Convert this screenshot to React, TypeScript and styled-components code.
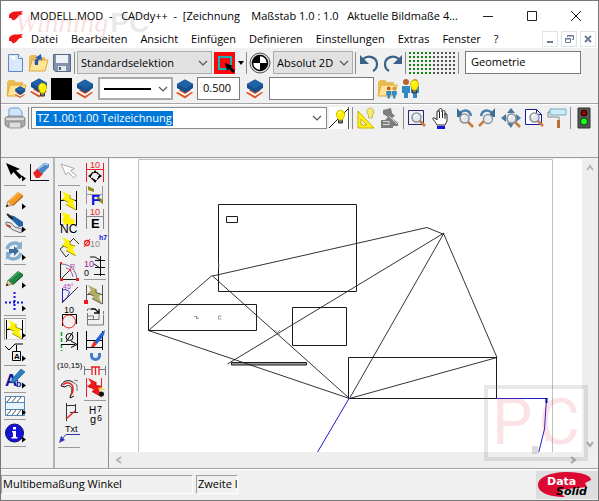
import React from "react";
import styled, { createGlobalStyle, css } from "styled-components";

const Global = createGlobalStyle`
  * { box-sizing: border-box; }
  body { margin: 0; background: #f0f0f0; }
  body, button, input, select { font-family: "Open Sans", "Noto Sans", sans-serif; font-size: 11px; line-height: 16px; color: #000; }
  svg { display: block; flex: none; }
`;

const Window = styled.div`
  position: relative;
  display: flex;
  flex-direction: column;
  min-height: 100vh;
  border: 1px solid #777;
  background: #f0f0f0;
`;

const TitleBar = styled.header`
  display: flex;
  align-items: center;
  height: 29px;
  padding-left: 7px;
  gap: 6px;
  background: #fff;
`;

const Title = styled.h1`
  flex: 1;
  min-width: 0;
  margin: 0;
  font-size: 11px;
  font-weight: 400;
  white-space: pre;
  overflow: hidden;
`;

const CaptionButton = styled.button`
  display: grid;
  place-items: center;
  width: 44px;
  height: 28px;
  padding: 0;
  border: 0;
  background: transparent;
`;

const CaptionGroup = styled.div`
  display: flex;
`;

const MenuBar = styled.nav`
  display: flex;
  align-items: center;
  gap: 13px;
  height: 18px;
  padding: 0 2px 0 7px;
  background: #fff;
`;

const MenuLogo = styled.span`
  width: 16px;
  margin-right: -6px;
`;

const MenuItem = styled.button`
  padding: 0;
  border: 0;
  background: transparent;
  white-space: nowrap;
`;

const ChildControls = styled.div`
  display: flex;
  gap: 3px;
  margin-left: auto;
`;

const ChildButton = styled.button`
  display: grid;
  place-items: center;
  width: 16px;
  height: 16px;
  padding: 0;
  border: 1px solid #dfe3e8;
  background: #fff;
`;

const Bars = styled.div`
  display: flex;
  flex-direction: column;
  gap: 1px;
  padding: 2px 0 2px 4px;
  border-bottom: 1px solid #a5a5a5;
`;

const ToolRow = styled.div`
  display: flex;
  align-items: center;
  gap: 2px;
  height: 25px;
`;

const ViewRow = styled(ToolRow)`
  height: 54px;
  padding: 2px 3px 0 3px;
  align-items: flex-start;
  border-top: 1px solid #fff;
  border-bottom: 1px solid #9b9b9b;
`;

const BarButton = styled.button<{ $w?: number; $bg?: string }>`
  display: grid;
  place-items: center;
  flex: none;
  width: ${(p) => p.$w ?? 22}px;
  height: 22px;
  padding: 0;
  border: 0;
  background: ${(p) => p.$bg ?? "transparent"};
`;

const VLine = styled.span`
  flex: none;
  width: 1px;
  height: 22px;
  background: #8d8d8d;
`;

const DropBox = styled.label<{ $w: number; $light?: boolean }>`
  display: grid;
  align-items: center;
  flex: none;
  width: ${(p) => p.$w}px;
  height: 23px;
  border: ${(p) => (p.$light ? "2px solid #a9a9a9" : "1px solid #adadad")};
  background: ${(p) => (p.$light ? "#fff" : "#e1e1e1")};
  & > * { grid-area: 1 / 1; }
  & > svg { pointer-events: none; justify-self: end; margin-right: 3px; }
`;

const Select = styled.select`
  appearance: none;
  width: 100%;
  padding: 0 16px 0 3px;
  border: 0;
  outline: 0;
  background: transparent;
`;

const LineSample = styled.span`
  width: 47px;
  height: 2px;
  margin-left: 4px;
  background: #000;
  pointer-events: none;
`;

const TextBox = styled.input<{ $w: number; $gap?: boolean }>`
  flex: none;
  width: ${(p) => p.$w}px;
  height: 23px;
  margin-left: ${(p) => (p.$gap ? 4 : 0)}px;
  padding: 0 5px 2px;
  border: 1px solid #7a7a7a;
  background: #fff;
`;

const Combo = styled.div`
  display: flex;
  align-items: center;
  flex: 1;
  min-width: 0;
  height: 22px;
  padding: 0 4px;
  border: 1px solid #8a8a8a;
  background: #fff;
`;

const ComboInput = styled.input`
  field-sizing: content;
  height: 15px;
  padding: 0 1px;
  border: 0;
  outline: 0;
  background: #0078d7;
  color: #fff;
`;

const ComboArrow = styled.button`
  margin-left: auto;
  padding: 0;
  border: 0;
  background: transparent;
`;

const Work = styled.main`
  display: flex;
  flex: 1;
  min-height: 0;
`;

const Palette = styled.aside<{ $wide?: boolean }>`
  display: flex;
  gap: ${(p) => (p.$wide ? 4 : 3)}px;
  padding: 2px 2px 0 3px;
  border-right: ${(p) => (p.$wide ? "1px solid #8d8d8d" : "2px solid #b4b4b4")};
`;

const ToolColumn = styled.div`
  display: flex;
  flex-direction: column;
  width: 22px;
`;

type Size = "s" | "m" | "l";
const heights = { s: 22, m: 23, l: 24 };

const Tool = styled.button<{ $size: Size; $on?: boolean }>`
  display: grid;
  place-items: center;
  flex: none;
  width: 22px;
  height: ${(p) => heights[p.$size]}px;
  padding: 0;
  border: 0;
  background: transparent;
  & > svg { overflow: visible; }
  ${(p) => p.$on && css`background: #f8f8f8; box-shadow: inset 1px 1px 0 #a0a0a0, inset -1px -1px 0 #d8d8d8;`}
`;

const Rule = styled.hr`
  flex: none;
  width: 22px;
  height: 1px;
  margin: 2px 0;
  border: 0;
  background: #999;
`;

const View = styled.section`
  display: grid;
  flex: 1;
  min-width: 0;
  grid-template: minmax(293px, 1fr) 16px / 1fr 16px;
  padding: 1px 0 0 1px;
`;

const Drawing = styled.svg`
  width: 100%;
  height: 100%;
  min-width: 0;
  background: #fff;
`;

const VScroll = styled.div`
  display: flex;
  flex-direction: column;
  justify-content: space-between;
  align-items: center;
  padding: 4px 0 3px;
  background: #eee;
`;

const HScroll = styled.div`
  display: flex;
  justify-content: space-between;
  align-items: center;
  padding: 0 4px;
  background: #eee;
`;

const ScrollButton = styled.button`
  padding: 0;
  border: 0;
  background: transparent;
`;

const StatusBar = styled.footer`
  display: flex;
  align-items: center;
  gap: 3px;
  height: 32px;
  border-top: 1px solid #a0a0a0;
  box-shadow: inset 0 1px 0 #fff;
`;

const StatusPanel = styled.output<{ $w: number }>`
  width: ${(p) => p.$w}px;
  height: 19px;
  padding-left: 1px;
  border: 1px solid #fff;
  border-top-color: #a0a0a0;
  border-left-color: #a0a0a0;
  white-space: nowrap;
  overflow: hidden;
`;

const Brand = styled.div`
  margin-left: auto;
  background: #dedede;
`;

const StampTop = styled.div`
  position: absolute;
  left: 14px;
  top: 8px;
  display: flex;
  align-items: center;
  gap: 2px;
  pointer-events: none;
  font: italic 28px/28px "Liberation Serif", serif;
  color: rgba(225, 110, 120, 0.22);
`;

const StampTopBold = styled.b`
  font: 700 28px/28px "Liberation Sans", sans-serif;
  color: rgba(120, 120, 120, 0.17);
`;

const StampBottom = styled.div`
  position: absolute;
  right: 10px;
  bottom: 39px;
  display: flex;
  justify-content: space-between;
  align-items: center;
  width: 104px;
  height: 76px;
  padding: 0 4px;
  border: 4px solid rgba(120, 120, 120, 0.18);
  pointer-events: none;
  font: 400 64px/60px Roboto, sans-serif;
  color: rgba(220, 60, 80, 0.15);
`;

const StampDot = styled.i`
  align-self: flex-end;
  width: 8px;
  height: 8px;
  margin-bottom: 3px;
  background: rgba(120, 120, 120, 0.25);
`;

const Ico = ({ w = 22, h = 22, children }: { w?: number; h?: number; children: React.ReactNode }) => (
  <svg width={w} height={h} viewBox={`0 0 ${w} ${h}`} fill="none" aria-hidden="true">
    {children}
  </svg>
);

const Chevron = ({ d = "M1 3l4 4 4-4", c = "#555", s = 1.2 }: { d?: string; c?: string; s?: number }) => (
  <Ico w={10} h={10}><path d={d} stroke={c} strokeWidth={s} /></Ico>
);

const sans = "Liberation Sans, sans-serif";
const T = ({ x, y, s = 8, c = "#000", b, children }: { x: number; y: number; s?: number; c?: string; b?: boolean; children: string }) => (
  <text x={x} y={y} fontSize={s} fill={c} fontFamily={sans} fontWeight={b ? 700 : 400}>{children}</text>
);

const RedBird = () => (
  <Ico w={16} h={12}>
    <path d="M1 6C1 3 5 1 9 1.500L15 1l-2 2 2 1-4 1.500L8 9l-3 1.500L3 8 1 8z" fill="#ee1515" />
  </Ico>
);

const Bulb = ({ x, y }: { x: number; y: number }) => (
  <g transform={`translate(${x} ${y})`}>
    <path d="M3.500 10h4v4h-4z" fill="#777" stroke="#333" />
    <path d="M5.500 1a4.500 4.500 0 0 1 3 7.500L7.500 11h-4L2.500 8.500A4.500 4.500 0 0 1 5.500 1z" fill="#fff200" stroke="#b9a900" strokeWidth=".8" />
    <path d="M4 4l1-1" stroke="#fff" strokeWidth="1.500" />
  </g>
);

const LayerShapes = () => (
  <>
    <path d="M1 14l4-3h10l3 2.500-8 6z" fill="#dc5629" />
    <path d="M1 10l9 5 8-5v2l-8 5-9-5z" fill="#fff" />
    <path d="M2 5l8-4.500L18 5v4l-7.500 5L2 9z" fill="#174f91" />
    <path d="M2 5l8-4.500L18 5l-7.500 4.500z" fill="#2062a8" />
  </>
);
const Layers = () => <Ico w={20} h={20}><LayerShapes /></Ico>;

const FolderShapes = () => (
  <>
    <path d="M2 4l2-2h5l2 2h7v13H2z" fill="#e8bd55" />
    <path d="M2 18L5 7h16l-3 11z" fill="#ffe494" stroke="#dba93a" />
  </>
);

const Lens = ({ x, y }: { x: number; y: number }) => (
  <g transform={`translate(${x} ${y})`}>
    <path d="M8.500 8.500L14 14" stroke="#c97b3c" strokeWidth="2.600" />
    <circle cx="5.500" cy="5.500" r="4.500" fill="#e0e8ee" stroke="#8c9399" strokeWidth="1.500" />
    <path d="M3 5a3 3 0 0 1 3-2.500" stroke="#fff" strokeWidth="1.300" />
  </g>
);

const Bolt = ({ c = "#fff200", e = "#8d8600", t }: { c?: string; e?: string; t?: string }) => (
  <g transform={t}>
    <path d="M4 2l8 4v3.500l5 1.500-2 3 3 7-10-5.500 2-2.500-6-2.500 3-3.500z" fill={c} />
    <path d="M12 6v3.500l5 1.500M8 15.500L18 21M4 10.500l6 2.500" stroke={e} strokeWidth=".8" />
  </g>
);

const Pencil = ({ c, d }: { c: string; d: string }) => (
  <>
    <path d="M2 18l2-6 4 4z" fill="#f2cfa0" stroke="#76502a" strokeWidth=".6" />
    <path d="M2 18l1-2.500 1.500 1.500z" fill="#000" />
    <path d="M4 12L14 3l5 3L8 16z" fill={c} />
    <path d="M8 16L19 6v2L9 17z" fill={d} />
    <path d="M5.500 12L15 4" stroke="#fff" strokeOpacity=".35" />
  </>
);

const More = () => <path d="M18 14.500l4 3-4 3z" fill="#000" />;

const Bars2 = ({ c = "#000" }: { c?: string }) => <path d="M2.500 2v19M18.500 2v19M2 11.500h17" stroke={c} />;

const icons: Record<string, React.ReactNode> = {
  pick: <><path d="M2 2l5 12 2.500-3 6 7 3-2.500-6.500-6L16 8z" fill="#000" /><More /></>,
  pencil: <><Pencil c="#f49a20" d="#b9600c" /><More /></>,
  pliers: <><path d="M5 3l5 1 9 6v4l-4 1-7-7-4-3z" fill="#2465a8" /><path d="M3 2l6 5" stroke="#222" strokeWidth="2" /><path d="M2 10l5 1 4 4 7 2-1 4-8-3-7-5z" fill="#dfe1e5" stroke="#555" strokeWidth=".8" /><path d="M3 13l4 2" stroke="#c43a32" strokeWidth="1.500" /><More /></>,
  cycle: <><path d="M3 9a8 8 0 0 1 13-4" stroke="#83aed0" strokeWidth="3.500" /><path d="M18 1v8h-7zM2 20v-8h7z" fill="#83aed0" /><path d="M17 13a8 8 0 0 1-13 4" stroke="#83aed0" strokeWidth="3.500" /><path d="M5 9h5V6l5 5-5 5v-3H5z" fill="#3c6e9c" /><More /></>,
  green: <><Pencil c="#1b8a3c" d="#085220" /><More /></>,
  cross: <><path d="M10.500 1v20M1 11.500h19" stroke="#1010ee" strokeWidth="2" strokeDasharray="2 2" /><More /></>,
  dim: <><Bars2 /><Bolt /></>,
  dimOn: <><Bars2 /><Bolt /><More /></>,
  datum: <><path d="M1 5l4 4 6-6h8M12.500 4v7" stroke="#000" /><path d="M8.500 10.500h8v9h-8z" stroke="#000" /><T x={10} y={18} s={8} b>A</T><More /></>,
  text: <><T x={1} y={18} s={17} c="#16169c" b>A</T><T x={12} y={19} s={9} c="#16169c" b>b</T><path d="M8 11L17 1l4 3L11 14l-4 1z" fill="#2b80c4" stroke="#185488" strokeWidth=".6" /><More /></>,
  hatch: <><path d="M1.500 1.500h19v19h-19z" fill="#fff" /><path d="M3 7l4-5M8 7l4-5M13 7l4-5M3 20l4-5M8 20l4-5M13 20l4-5" stroke="#555" /><path d="M2 8h18v6H2z" fill="#e6f2fc" /><path d="M1.500 1.500h19v19h-19zM1.500 7.500h19M1.500 14.500h19" stroke="#5585b5" /><More /></>,
  info: <><circle cx="10.500" cy="11" r="9" fill="#1414d0" stroke="#0c0c82" /><path d="M9 5h3v2.500H9zM8 9h4v6h1.500v1.500h-6V15H9v-4.500H8z" fill="#fff" /><More /></>,
  eraser: <><path d="M1.500 3v17M1 19.500h19" stroke="#111" /><path d="M4 12l5-5 5 6-4 4H7z" fill="#e92323" /><path d="M8 8l7-6 5 1v3l-7 7z" fill="#4b87c7" /><path d="M9 8l7-5 3 1" stroke="#a8cdf0" strokeWidth="1.500" /></>,
  pickWhite: <path d="M3 3l5 11 2.500-3 5 6 3-2.500-6-5 4-2z" fill="#fff" stroke="#aaa" />,
  nc: <><path d="M2.500 1v12M18.500 1v12" stroke="#000" /><path d="M4 0l8 3v3l5 2-1 4-9 1-3-5 2-2z" fill="#fff200" /><T x={2} y={21} s={12}>NC</T></>,
  dimAngle: <><path d="M12 6l4-4M15 2l6 6M2 13l4-3M2 13l6 8M8 21l3-3" stroke="#333" /><Bolt t="translate(0 -1)" /></>,
  arc: <><path d="M3 4C12 4 18 10 19 19" stroke="#6c6ca4" /><path d="M8 8c4 1 6 4 7 9" stroke="#a447a4" /><path d="M2.500 3v16.500H20M3 19l9-9" stroke="#222" /><path d="M2 2h2v2H2zM18 18h3v3h-3zM2 18h3v3H2zM11 9h2v2h-2z" fill="#e22" /><T x={12} y={9} s={7} c="#a447a4">R</T></>,
  slope: <><path d="M4.500 5v15M4 20L20 4" stroke="#333" /><path d="M4.500 7v11c3-1 6-5 7-9C10 7 7 6 4.500 7z" stroke="#2222cc" /><T x={5} y={6} s={7} c="#b040c0">45°</T></>,
  circle: <><path d="M4.500 19V7.500h14V17" stroke="#000" /><T x={6} y={6} s={9}>10</T><circle cx="11" cy="14.500" r="6.500" stroke="#f01818" /></>,
  diameter: <><path d="M3.500 2v19" stroke="#12a12a" strokeDasharray="4 2" strokeWidth="1.500" /><path d="M3 14.500h14M19.500 2v18M13 11l6 3.500-6 3M15 2L8 12" stroke="#000" /><circle cx="11.500" cy="7" r="3.500" stroke="#000" /></>,
  coord: <T x={-1} y={14} s={8}>(10,15)</T>,
  curve: <><path d="M3 9c2-6 9-7 13-3M3 9l4 1M7 10c3-3 7-1 7 3s-2 5-2 8M12 21l4-2" stroke="#111" /><path d="M5 8c4-4 10-2 10 4 0 3-1 5-2 6" stroke="#e82020" strokeWidth="1.500" /><path d="M15 5l4 3v6M16 3l4 1" stroke="#777" /></>,
  poly: <><path d="M8.500 3v18M8 5.500h10M17.500 4v8M12 12.500h8" stroke="#333" /><path d="M8 19l9-8" stroke="#e82020" strokeWidth="1.300" /></>,
  leader: <><T x={7} y={9} s={9}>Txt</T><path d="M22 11.500H8L3 17" stroke="#3232a0" /><path d="M1 20l2-7 4 4z" fill="#3232c0" /></>,
  fit: <><T x={6} y={7} s={9} c="#e82020">10</T><path d="M2.500 2v19M19.500 2v19M2 8.500h18" stroke="#e82020" /><circle cx="11" cy="15" r="4" stroke="#000" strokeWidth="1.300" strokeDasharray="4 2.300" /><path d="M11 9l2 3H9zM11 22l2-3H9zM4 15l3-2v4zM18 15l-3-2v4z" fill="#000" /></>,
  font: <><path d="M2.500 1v18M18.500 1v18M2 9.500h17" stroke="#999" /><path d="M4 1l6 3v3L4 5zM13 11l6 4v4l-6-4z" fill="#978a18" /><T x={7} y={20} s={15} c="#1010e8" b>F</T></>,
  edit: <><T x={6} y={7} s={9} c="#e82020">10</T><path d="M2.500 1v20M19.500 1v20M2 8.500h17" stroke="#888" /><T x={7} y={20} s={13} b>E</T></>,
  tol: <><circle cx="3" cy="11" r="2.500" stroke="#e82020" strokeWidth="1.300" /><path d="M0 15L6 7" stroke="#e82020" /><T x={6} y={15} s={9} c="#888">10</T><T x={15} y={8} s={7} c="#1010e8" b>h7</T></>,
  scale: <><T x={0} y={12} s={9} c="#902090">10</T><T x={0} y={21} s={9}>0</T><path d="M16.500 1v20M11 5.500h10M11 12.500h10M10 19.500h11M6 2h5l5 3M10 9l6 4" stroke="#111" /></>,
  dimGray: <><Bars2 c="#555" /><Bolt c="#b3ae62" e="#444" /><path d="M0 17h4v4H0z" fill="#f01818" /></>,
  nested: <><path d="M3.500 7v12h16V9M9.500 14v-4h-6M3 13.500h12V5M3.500 5V3h7M19.500 5v3" stroke="#777" /><path d="M7 3h4l4 4M15 3v4h-5" stroke="#111" strokeWidth="1.300" /></>,
  brush: <><Bars2 /><path d="M10 13l7-9 4-3-1 5-7 9z" fill="#1c62d8" /><path d="M10 12l3 3-3 3H7z" fill="#f02a2a" /><path d="M3 18.500h15" stroke="#111" /></>,
  magnet: <><path d="M7.500 0v3a4 3.500 0 0 0 8 0V0" stroke="#447ccc" strokeWidth="3" /><path d="M.5 13v9M21.500 13v9M0 16.500h7M15 16.500h7" stroke="#777" /><path d="M8 22v-8M11.500 22v-8M15 22v-8M7 14h9" stroke="#e82020" strokeWidth="1.300" /></>,
  dimRed: <><path d="M2.500 2v19M17.500 2v10M2 10h15" stroke="#e82020" /><Bolt c="#f01818" e="#b00000" /><circle cx="17.500" cy="18" r="2.500" fill="#111" /><path d="M17 11v4M14 12l7 2" stroke="#e8d619" /></>,
  fitClass: <><T x={5} y={10} s={10}>H</T><T x={13} y={8} s={9}>7</T><T x={6} y={19} s={11}>g</T><T x={13} y={17} s={9}>6</T></>,
};

type Entry = "-" | [string, string, Size];
const columns: Entry[][] = [
  [["pick", "Auswählen", "m"], "-", ["pencil", "Zeichnen", "m"], ["pliers", "Ändern", "m"], "-", ["cycle", "Transformieren", "m"], "-", ["green", "Konstruieren", "m"], ["cross", "Hilfslinien", "m"], "-", ["dimOn", "Bemaßung", "s"], ["datum", "Symbole", "m"], "-", ["text", "Text", "s"], "-", ["hatch", "Schraffur", "s"], "-", ["info", "Information", "s"], "-"],
  [["eraser", "Löschen", "m"]],
  [["pickWhite", "Wählen", "m"], "-", ["dim", "Multibemaßung", "m"], ["nc", "NC-Bemaßung", "l"], ["dimAngle", "Parallelbemaßung", "l"], ["arc", "Multibemaßung Winkel", "m"], ["slope", "Winkelbemaßung", "l"], ["circle", "Durchmesser", "m"], ["diameter", "Durchmesser linear", "l"], ["coord", "Koordinaten", "m"], ["curve", "Bogenlänge", "m"], ["poly", "Fase", "m"], ["leader", "Hinweistext", "m"], "-"],
  [["fit", "Maß verschieben", "l"], ["font", "Schrift", "m"], ["edit", "Maßtext", "l"], ["tol", "Toleranz", "m"], ["scale", "Maßkette", "m"], "-", ["dimGray", "Maß lösen", "m"], ["nested", "Maß anordnen", "m"], ["brush", "Maß formatieren", "l"], ["magnet", "Maß fangen", "m"], ["dimRed", "Maß löschen", "m"], "-", ["fitClass", "Passung", "m"]],
];

const Column = ({ items }: { items: Entry[] }) => (
  <ToolColumn>
    {items.map((it, i) =>
      it === "-" ? <Rule key={i} /> : (
        <Tool key={i} $size={it[2]} $on={it[0] === "dimOn"} aria-label={it[1]}><Ico>{icons[it[0]]}</Ico></Tool>
      ))}
  </ToolColumn>
);

const menus = ["Datei", "Bearbeiten", "Ansicht", "Einfügen", "Definieren", "Einstellungen", "Extras", "Fenster", "?"];

const dots = Array.from({ length: 12 * 6 }, (_, i) => ({ x: (i % 12) * 4, y: Math.floor(i / 12) * 4 }));

const Undo = ({ flip }: { flip?: boolean }) => (
  <Ico w={20} h={20}>
    <g transform={flip ? "translate(20 0) scale(-1 1)" : undefined}>
      <path d="M4 6c6-5 14-1 14 5 0 3-2 6-4 7" stroke="#3b6389" strokeWidth="2.200" />
      <path d="M1 2v9h9z" fill="#3b6389" />
    </g>
  </Ico>
);

const Turn = ({ flip }: { flip?: boolean }) => (
  <Ico w={20}>
    <g transform={flip ? "translate(19 0) scale(-1 1)" : undefined}>
      <path d="M5 6c4-4 10-3 11 3" stroke="#4f7fa6" strokeWidth="2.500" />
      <path d="M2 1v9h8z" fill="#3b6f98" />
    </g>
    {flip ? <><path d="M7 13l-6 6" stroke="#c97b3c" strokeWidth="2.500" /><circle cx="10" cy="12" r="4.500" fill="#e4e9ed" stroke="#8c9399" strokeWidth="1.300" /></> : <Lens x={4} y={6} />}
  </Ico>
);

const People = () => (
  <>
    <circle cx="6" cy="4" r="3" fill="#ba612d" /><circle cx="15" cy="4" r="3" fill="#e08b38" />
    <path d="M2 8h8v7H8v5H4v-5H2zM11 8h8v7h-2v5h-4v-5h-2z" fill="#3289c4" />
  </>
);

const Paper = () => (
  <Drawing viewBox="110 159 472 293" preserveAspectRatio="xMinYMin meet" fill="none" role="img" aria-label="Zeichnung">
    <path d="M138.500 454V159.500h414V454" stroke="#c0c0c0" />
    <g stroke="#1c1c1c">
      <path d="M218.500 204.500h138v87h-138zM226.500 216.500h11v6h-11zM148.500 304.500h108v26h-108zM292.500 307.500h54v38h-54zM348.500 357.500h148v41h-148z" />
      <path d="M231.500 362.500h75v2.500h-75z" fill="#999" />
      <path d="M148.500 330.500L212 275.500 349.500 398.500zM212.500 276L427 227.500l17 7 53 123L349.500 398.500 444 233 227.500 364" strokeWidth=".9" />
    </g>
    <path d="M349 398.500L317 453M496.500 398.500h51M546.500 398l-2 31-6 24" stroke="#1e1ecb" />
    <path d="M546.500 398v5" stroke="#0808a0" strokeWidth="2" />
    <path d="M275 330l5 5M280 330l-5 5M194 316.500h3v2h2M196.500 316v3M218.500 316h3M218.500 316v3h3M218 264h1v3h-1M546 440h1" stroke="#888" strokeWidth=".8" />
  </Drawing>
);

export default function App() {
  return (
    <Window>
      <Global />
      <TitleBar>
        <RedBird />
        <Title>{"MODELL.MOD  -   CADdy++  -  [Zeichnung    Maßstab 1.0 : 1.0   Aktuelle Bildmaße 4..."}</Title>
        <CaptionGroup>
          <CaptionButton aria-label="Minimieren"><Ico w={10} h={10}><path d="M0 5.500h10" stroke="#222" /></Ico></CaptionButton>
          <CaptionButton aria-label="Maximieren"><Ico w={10} h={10}><path d="M.5.5h9v9h-9z" stroke="#222" /></Ico></CaptionButton>
          <CaptionButton aria-label="Schließen"><Ico w={10} h={10}><path d="M0 0l10 10M10 0L0 10" stroke="#222" /></Ico></CaptionButton>
        </CaptionGroup>
      </TitleBar>
      <MenuBar>
        <MenuLogo><RedBird /></MenuLogo>
        {menus.map((m) => <MenuItem key={m}>{m}</MenuItem>)}
        <ChildControls>
          <ChildButton aria-label="Fenster minimieren"><Ico w={10} h={10}><path d="M2 8h6" stroke="#6b7a92" strokeWidth="2" /></Ico></ChildButton>
          <ChildButton aria-label="Fenster wiederherstellen"><Ico w={10} h={10}><path d="M3.500 3V1.500h6v4H8M1.500 4.500h5v4h-5zM1 5h6M3 2h7" stroke="#6b7a92" /></Ico></ChildButton>
          <ChildButton aria-label="Fenster schließen"><Ico w={10} h={10}><path d="M2 2l6 6M8 2L2 8" stroke="#6b7a92" strokeWidth="2" /></Ico></ChildButton>
        </ChildControls>
      </MenuBar>

      <Bars>
        <ToolRow>
          <BarButton $w={20} aria-label="Neu"><Ico w={18} h={20}><path d="M2.500 1.500h10l4 4v13h-14z" fill="#d9e9fb" stroke="#5f87c0" /><path d="M12.500 1.500v4h4" fill="#fff" stroke="#5f87c0" /><path d="M4 3h5v5z" fill="#fff" /></Ico></BarButton>
          <BarButton aria-label="Öffnen"><Ico w={22} h={20}><FolderShapes /><path d="M8 12c-1-4 0-6 3-7H8l6-4 1 7-2-2c-2 1-2 3-2 6z" fill="#2458b8" /></Ico></BarButton>
          <BarButton $w={21} aria-label="Speichern"><Ico w={20} h={20}><path d="M1.500 1.500h17v17h-15l-2-2z" fill="#7f93ad" stroke="#536781" /><path d="M4 2h12v8H4z" fill="#eef2f7" /><path d="M6 13h8v5H6z" fill="#e4e7eb" /><path d="M7 14h2v3H7z" fill="#465a74" /></Ico></BarButton>
          <VLine />
          <DropBox $w={135}><Select aria-label="Selektion"><option>Standardselektion</option></Select><Chevron /></DropBox>
          <BarButton $w={21} $bg="#fa0a0a" aria-label="Selektionsfenster"><Ico w={20} h={20}><path d="M4 4h12v12H4z" stroke="#12b4ba" strokeWidth="2" /><path d="M10 10l8 3-2 1 4 4-2 2-4-4-2 2z" fill="#000" /></Ico></BarButton>
          <BarButton $w={7} aria-label="Weitere Optionen"><Ico w={6} h={4}><path d="M0 0h6L3 4z" fill="#000" /></Ico></BarButton>
          <VLine />
          <BarButton aria-label="Schwerpunkt"><Ico><circle cx="11" cy="11" r="10" fill="#ddd" stroke="#555" /><circle cx="11" cy="11" r="7.500" fill="#fff" stroke="#000" strokeWidth="1.500" /><path d="M11 11V3.500A7.500 7.500 0 0 0 3.500 11zM11 11v7.500a7.500 7.500 0 0 0 7.500-7.500z" fill="#000" /></Ico></BarButton>
          <DropBox $w={80}><Select aria-label="Koordinatenmodus"><option>Absolut 2D</option></Select><Chevron /></DropBox>
          <VLine />
          <BarButton aria-label="Rückgängig"><Undo /></BarButton>
          <BarButton $w={21} aria-label="Wiederholen"><Undo flip /></BarButton>
          <VLine />
          <BarButton $w={48} aria-label="Raster"><Ico w={46}>{dots.map((d) => <rect key={`${d.x}-${d.y}`} x={d.x} y={d.y} width="2" height="2" fill={d.x < 24 ? "#168016" : "#555"} />)}</Ico></BarButton>
          <VLine />
          <TextBox $w={116} $gap aria-label="Ebene" defaultValue="Geometrie" />
        </ToolRow>
        <ToolRow>
          <BarButton $w={22} aria-label="Folien öffnen"><Ico w={22}><FolderShapes /><g transform="translate(9 8) scale(.62)"><LayerShapes /></g></Ico></BarButton>
          <BarButton $w={20} aria-label="Folien einblenden"><Ico w={20}><LayerShapes /><Bulb x={8} y={4} /></Ico></BarButton>
          <BarButton $w={21} $bg="#000" aria-label="Farbe" />
          <BarButton aria-label="Farbe nach Folie"><Layers /></BarButton>
          <DropBox $w={75} $light><Select aria-label="Linienart"><option aria-label="Volllinie" /></Select><LineSample /><Chevron /></DropBox>
          <BarButton $w={20} aria-label="Linienart nach Folie"><Layers /></BarButton>
          <TextBox $w={43} aria-label="Strichstärke" defaultValue="0.500" />
          <BarButton $w={25} aria-label="Stärke nach Folie"><Layers /></BarButton>
          <TextBox $w={105} aria-label="Gruppe" />
          <BarButton $w={22} aria-label="Gruppen öffnen"><Ico w={22}><FolderShapes /><g transform="translate(9 8) scale(.62)"><People /></g></Ico></BarButton>
          <BarButton $w={21} aria-label="Gruppen einblenden"><Ico w={21}><People /><Bulb x={9} y={1} /></Ico></BarButton>
        </ToolRow>
      </Bars>

      <ViewRow>
        <BarButton aria-label="Drucken"><Ico><path d="M5 10V2l2-1h8l3 4v6z" fill="#cfe5fb" stroke="#6fa0d8" /><path d="M1 11l3-2h14l3 2v7l-2 2H3l-2-2z" fill="#a9a9a9" stroke="#777" strokeWidth=".7" /><path d="M2 12h18" stroke="#eee" strokeWidth="1.500" /><path d="M5 15h12v6H5z" fill="#ddd" stroke="#777" strokeWidth=".7" /></Ico></BarButton>
        <VLine />
        <Combo>
          <ComboInput aria-label="Teilzeichnung" defaultValue="TZ 1.00:1.00 Teilzeichnung" />
          <ComboArrow aria-label="Liste öffnen"><Chevron /></ComboArrow>
        </Combo>
        <BarButton $w={21} $bg="#fff" aria-label="Beleuchtung"><Ico w={21}><path d="M0 21L20 1" stroke="#111" /><path d="M19.500 0v22" stroke="#555" /><Bulb x={6} y={2} /></Ico></BarButton>
        <VLine />
        <BarButton aria-label="Konstruktionshilfe"><Ico><path d="M3 4l16 17H3z" fill="#ffee17" stroke="#c8b400" /><path d="M6 12l6 6H6z" fill="#f0f0f0" stroke="#c8b400" /><path d="M14.500 1a4 4 0 0 1 3 7v3h-4V8a4 4 0 0 1 1-7z" fill="#f9ec69" stroke="#c3b66d" /></Ico></BarButton>
        <BarButton aria-label="Stempel"><Ico><path d="M4 3l8-2 1 5 3 3-3 2 6 5v3h-5v2H2v-8h4l3-3-5-3z" fill="#7d7d7d" /><path d="M4 14.500h6v3H4M10 9l8 8" stroke="#dcdcdc" /></Ico></BarButton>
        <VLine />
        <BarButton aria-label="Zoom Fenster"><Ico><path d="M2.500 3.500h15v14h-15z" stroke="#23237b" /><Lens x={5} y={5} /></Ico></BarButton>
        <BarButton aria-label="Verschieben"><Ico><path d="M7 18c-2-4-5-6-4-7s3 1 4 2V5c0-2 2-2 2 0V3c0-2 3-2 3 0v2c0-2 3-2 3 0v3c0-2 2-2 2 0v6l-2 4z" fill="#fff" stroke="#222" /><path d="M9.500 5v6M12.500 5v6M15 7v5" stroke="#222" /><path d="M7 19h8v3H7z" fill="#1414e0" /></Ico></BarButton>
        <BarButton aria-label="Vorige Ansicht"><Turn /></BarButton>
        <BarButton $w={20} aria-label="Nächste Ansicht"><Turn flip /></BarButton>
        <BarButton aria-label="Alles zeigen"><Ico><path d="M11 1l4 5H7zM1 11l5-4v8zM21 11l-5-4v8zM11 21l-4-5h7z" fill="#4679a2" /><Lens x={6} y={6} /></Ico></BarButton>
        <BarButton $w={21} aria-label="Blatt zeigen"><Ico w={21}><path d="M1.500 2.500h11l5 5v10h-16zM12.500 2.500v5h5" fill="#fff" stroke="#1b1b9b" /><Lens x={5} y={5} /></Ico></BarButton>
        <BarButton $w={21} aria-label="Neu zeichnen"><Ico w={21}><path d="M3 2h16v6H3z" fill="#cdeafa" stroke="#79a9c4" /><path d="M3 5H1v5h11v4" stroke="#888" /><path d="M10 13h3v8h-3z" fill="#bb6e32" /></Ico></BarButton>
        <VLine />
        <BarButton aria-label="Status"><Ico><path d="M5 1h12v20H5z" fill="#555" stroke="#333" /><circle cx="11" cy="6" r="3" fill="#8c0000" stroke="#200" /><circle cx="11" cy="14.500" r="3.500" fill="#1dff1d" stroke="#041" /></Ico></BarButton>
      </ViewRow>

      <Work>
        <Palette><Column items={columns[0]} /><Column items={columns[1]} /></Palette>
        <Palette $wide><Column items={columns[2]} /><Column items={columns[3]} /></Palette>
        <View>
          <Paper />
          <VScroll>
            <ScrollButton aria-label="Nach oben"><Chevron d="M2 7l3-4 3 4" c="#b5b5b5" s={2} /></ScrollButton>
            <ScrollButton aria-label="Nach unten"><Chevron d="M2 3l3 4 3-4" c="#a5a5a5" s={2} /></ScrollButton>
          </VScroll>
          <HScroll>
            <ScrollButton aria-label="Nach links"><Chevron d="M7 2L3 5l4 3" c="#b5b5b5" s={2} /></ScrollButton>
            <ScrollButton aria-label="Nach rechts"><Chevron d="M3 2l4 3-4 3" c="#a5a5a5" s={2} /></ScrollButton>
          </HScroll>
        </View>
      </Work>

      <StatusBar>
        <StatusPanel $w={192}>Multibemaßung Winkel</StatusPanel>
        <StatusPanel $w={42}>Zweite l</StatusPanel>
        <Brand>
          <svg width="62" height="28" viewBox="0 0 62 28" role="img" aria-label="Data Solid">
            <path d="M2 14C2 6 15 1 31 1s24 4 24 8l-6 3 2 4-30 3 8 7C12 26 2 21 2 14z" fill="#dc0a32" />
            <text x="11" y="14" fontSize="11" fontWeight="700" fill="#fff" fontFamily="DejaVu Sans, sans-serif">Data</text>
            <text x="20" y="24" fontSize="11" fontWeight="700" fontStyle="italic" fill="#000" fontFamily="DejaVu Sans, sans-serif">Solid</text>
          </svg>
        </Brand>
      </StatusBar>

      <StampTop>Winning<StampTopBold>PC</StampTopBold></StampTop>
      <StampBottom><span>P</span><StampDot /><span>C</span></StampBottom>
    </Window>
  );
}
